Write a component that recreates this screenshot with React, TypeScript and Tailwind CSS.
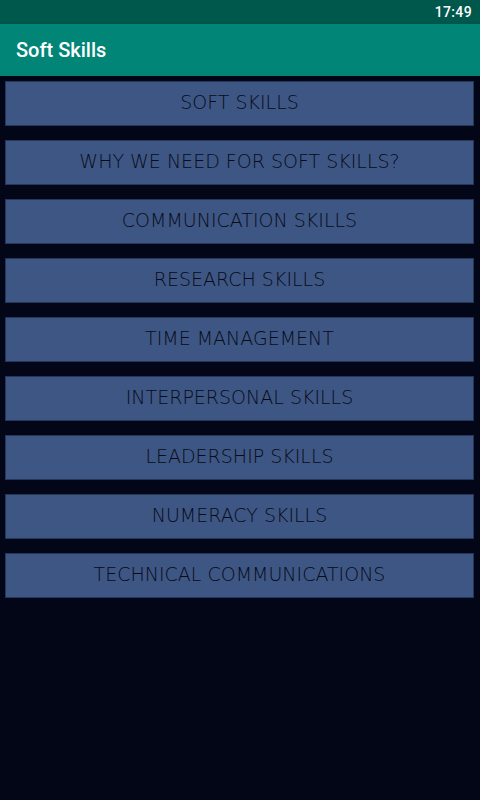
const TOPICS = [
  'SOFT SKILLS',
  'WHY WE NEED FOR SOFT SKILLS?',
  'COMMUNICATION SKILLS',
  'RESEARCH SKILLS',
  'TIME MANAGEMENT',
  'INTERPERSONAL SKILLS',
  'LEADERSHIP SKILLS',
  'NUMERACY SKILLS',
  'TECHNICAL COMMUNICATIONS',
]

export default function App() {
  return (
    <div className="w-[480px] h-[800px] flex flex-col bg-[#020617] font-['Roboto',sans-serif]">
      {/* status bar */}
      <div className="h-6 bg-[#00574b] flex items-center justify-end pr-2">
        <span className="text-white text-[14px] font-medium tracking-wide">17:49</span>
      </div>
      {/* toolbar */}
      <div className="h-[52px] bg-[#008577] flex items-center px-4 shadow">
        <span className="text-white text-[20px] font-medium">Soft Skills</span>
      </div>
      <div className="flex flex-col gap-[14px] pt-[5px] pl-[5px] pr-[6px]">
        {TOPICS.map((topic) => (
          <div
            key={topic}
            className="h-[45px] bg-[#3e5684] border border-[#26365a] flex items-center justify-center pb-[3px]"
          >
            <span className="text-[#080c18] text-[19px] font-['DejaVu_Sans',sans-serif] font-extralight">
              {topic}
            </span>
          </div>
        ))}
      </div>
    </div>
  )
}
